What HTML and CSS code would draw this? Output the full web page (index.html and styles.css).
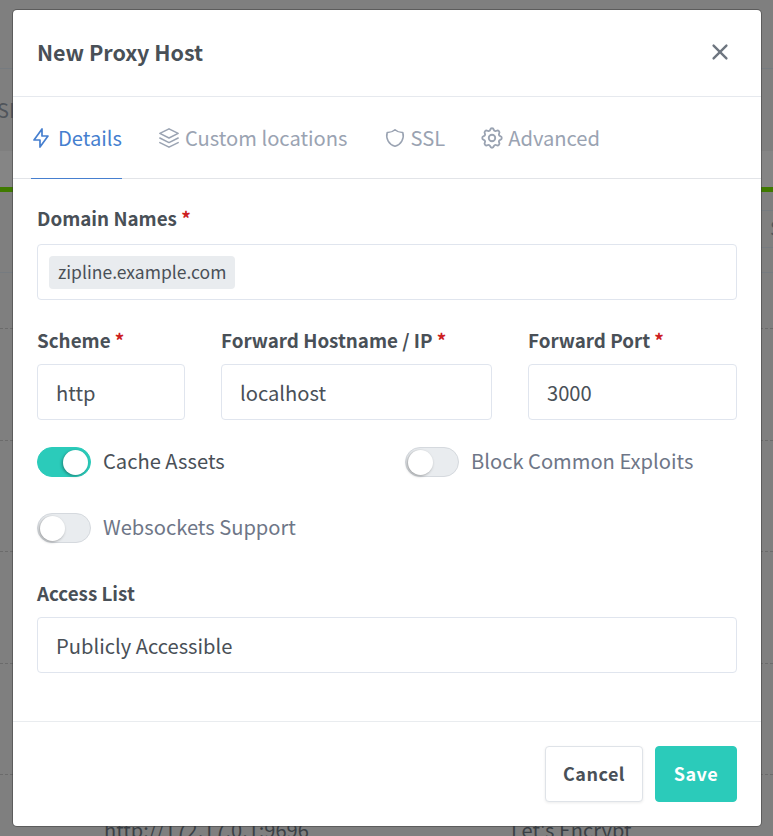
FILE: index.html
```html
<!DOCTYPE html>
<html lang="en">
<head>
<meta charset="utf-8">
<title>New Proxy Host</title>
<link rel="stylesheet" href="styles.css">
</head>
<body>
<div class="backdrop">
  <span class="bg-line solid l1"></span>
  <span class="bg-line solid l2"></span>
  <span class="bg-line solid l3"></span>
  <span class="bg-line solid l4"></span>
  <span class="bg-line dash d1"></span>
  <span class="bg-line dash d2"></span>
  <span class="bg-line dash d3"></span>
  <span class="bg-line dash d4"></span>
  <span class="bg-line dash d5"></span>
  <span class="bg-band"></span>
  <span class="bg-green"></span>
  <span class="bg-text t1">SI</span>
  <span class="bg-text t2">S</span>
  <span class="bg-text t3">http://172.17.0.1:9696</span>
  <span class="bg-text t4">Let's Encrypt</span>
</div>
<main class="modal">
  <header class="modal-header">
    <h1 class="modal-title">New Proxy Host</h1>
    <svg class="close" viewBox="0 0 24 24" fill="none" stroke="currentColor" stroke-width="2.6" stroke-linecap="round"><path d="M5 5l14 14M19 5L5 19"/></svg>
  </header>
  <nav class="tabs">
    <a class="tab active">
      <svg class="tab-icon icon-bolt" viewBox="0 0 24 24"><path d="M13 3v7h6l-8 11v-7H5l8-11"/></svg>
      Details
    </a>
    <a class="tab">
      <svg class="tab-icon icon-layers" viewBox="0 0 24 24"><path d="M12 2L2 7l10 5l10-5l-10-5"/><path d="M2 17l10 5l10-5"/><path d="M2 12l10 5l10-5"/></svg>
      Custom locations
    </a>
    <a class="tab">
      <svg class="tab-icon icon-shield" viewBox="0 0 24 24"><path d="M12 3a12 12 0 0 0 8.5 3a12 12 0 0 1-8.5 15a12 12 0 0 1-8.5-15a12 12 0 0 0 8.5-3"/></svg>
      SSL
    </a>
    <a class="tab">
      <svg class="tab-icon icon-gear" viewBox="0 0 24 24"><path d="M10.325 4.317c.426-1.756 2.924-1.756 3.35 0a1.724 1.724 0 0 0 2.573 1.066c1.543-.94 3.31.826 2.37 2.37a1.724 1.724 0 0 0 1.065 2.572c1.756.426 1.756 2.924 0 3.35a1.724 1.724 0 0 0-1.066 2.573c.94 1.543-.826 3.31-2.37 2.37a1.724 1.724 0 0 0-2.572 1.065c-.426 1.756-2.924 1.756-3.35 0a1.724 1.724 0 0 0-2.573-1.066c-1.543.94-3.31-.826-2.37-2.37a1.724 1.724 0 0 0-1.065-2.572c-1.756-.426-1.756-2.924 0-3.35a1.724 1.724 0 0 0 1.066-2.573c-.94-1.543.826-3.31 2.37-2.37c1 .608 2.296.07 2.572-1.065z"/><circle cx="12" cy="12" r="3"/></svg>
      Advanced
    </a>
  </nav>
  <section class="modal-body">
    <div class="field">
      <div class="label label-first">Domain Names <span class="req">*</span></div>
      <div class="input tags"><span class="chip">zipline.example.com</span></div>
    </div>
    <div class="row-3">
      <div class="field">
        <div class="label">Scheme <span class="req">*</span></div>
        <div class="input">http</div>
      </div>
      <div class="field">
        <div class="label">Forward Hostname / IP <span class="req">*</span></div>
        <div class="input">localhost</div>
      </div>
      <div class="field">
        <div class="label">Forward Port <span class="req">*</span></div>
        <div class="input">3000</div>
      </div>
    </div>
    <div class="switches">
      <label class="switch on"><span class="track"><span class="knob"></span></span><span class="switch-text">Cache Assets</span></label>
      <label class="switch"><span class="track"><span class="knob"></span></span><span class="switch-text">Block Common Exploits</span></label>
      <label class="switch"><span class="track"><span class="knob"></span></span><span class="switch-text">Websockets Support</span></label>
    </div>
    <div class="field">
      <div class="label">Access List</div>
      <div class="input">Publicly Accessible</div>
    </div>
  </section>
  <footer class="modal-footer">
    <button class="btn btn-cancel">Cancel</button>
    <button class="btn btn-save">Save</button>
  </footer>
</main>
</body>
</html>
```
FILE: styles.css
```css
* { box-sizing: border-box; }
html, body { margin: 0; padding: 0; height: 100%; }
body {
  background: #7f7f7f;
  font-family: "Noto Sans CJK JP", "Source Sans Pro", "Noto Sans", sans-serif;
  color: #495057;
  overflow: hidden;
  position: relative;
}
.backdrop { position: absolute; inset: 0; overflow: hidden; }
.bg-line { position: absolute; left: 0; right: 0; height: 1px; }
.solid { background: #767b80; }
.l1 { top: 68px; }
.l2 { top: 272px; }
.l3 { top: 210px; left: 761px; }
.l4 { top: 247px; left: 761px; }
.dash { border-top: 1px dashed #6b6b6b; height: 0; }
.d1 { top: 328px; }
.d2 { top: 440px; }
.d3 { top: 551px; }
.d4 { top: 663px; }
.d5 { top: 774px; }
.bg-band { position: absolute; left: 0; right: 0; top: 151px; height: 36px; background: #858585; }
.bg-green { position: absolute; left: 0; right: 0; top: 187px; height: 5px; background: #3f7a00; }
.bg-text { position: absolute; font-size: 20px; line-height: 24px; color: #3a3f45; white-space: nowrap; }
.t1 { left: -3px; top: 98px; color: #50555b; }
.t2 { left: 770px; top: 216px; color: #50555b; }
.t3 { left: 104px; top: 818px; }
.t4 { left: 511px; top: 818px; }

.modal {
  position: absolute;
  left: 13px;
  top: 10px;
  width: 748px;
  height: 816px;
  background: #fff;
  border-radius: 4px;
  display: flex;
  flex-direction: column;
  box-shadow: 0 0 0 1px rgba(50, 50, 50, .45);
}
.modal-header {
  height: 87px;
  flex: none;
  display: flex;
  align-items: center;
  justify-content: space-between;
  padding: 0 30px 0 24px;
  border-bottom: 1px solid #e6e9ee;
}
.modal-title { margin: 0 0 3px; font-size: 21.5px; line-height: 28px; font-weight: 700; color: #495057; }
.close { width: 22px; height: 22px; color: #6e7680; margin-bottom: 3px; }

.tabs {
  height: 82px;
  flex: none;
  display: flex;
  gap: 36px;
  padding: 0 0 0 18px;
  border-bottom: 1px solid #e2e4e8;
}
.tab {
  display: flex;
  align-items: center;
  gap: 5px;
  height: 82px;
  font-size: 20.15px;
  color: #9aa3b2;
  border-bottom: 1px solid transparent;
}
.tab.active { color: #467fcf; border-bottom-color: #467fcf; }
.tab-icon {
  fill: none;
  stroke: currentColor;
  stroke-width: 1.7;
  stroke-linecap: round;
  stroke-linejoin: round;
}
.icon-bolt { width: 24px; height: 24px; margin-left: -2px; }
.icon-layers { width: 22px; height: 22px; }
.icon-shield { width: 22px; height: 22px; }
.icon-gear { width: 26px; height: 26px; margin-left: -2px; margin-right: -2px; }

.modal-body { flex: 1; padding: 27px 24px 0; display: flex; flex-direction: column; }
.field { display: flex; flex-direction: column; min-width: 0; }
.label { font-size: 18.8px; line-height: 24px; font-weight: 700; color: #495057; margin-bottom: 12px; }
.label-first { margin-bottom: 14px; }
.req { color: #cd201f; }
.input {
  height: 56px;
  border: 1px solid #e0e5ee;
  border-radius: 4px;
  padding: 0 18px;
  display: flex;
  align-items: center;
  font-size: 20.15px;
  color: #495057;
}
.input.tags { padding: 0 11px; }
.chip {
  height: 33px;
  padding: 0 9px 1px;
  display: flex;
  align-items: center;
  background: #e9ecef;
  border-radius: 4px;
  font-size: 17.5px;
  color: #495057;
}
.row-3 {
  display: grid;
  grid-template-columns: 148px 271px 209px;
  gap: 36px;
  margin-top: 28px;
}
.switches {
  display: grid;
  grid-template-columns: 368px 1fr;
  row-gap: 36px;
  margin-top: 27px;
  margin-bottom: 38px;
}
.switch { display: flex; align-items: center; gap: 12px; height: 30px; }
.track {
  width: 54px;
  height: 30px;
  border-radius: 15px;
  background: #e9ecef;
  border: 1px solid #d5d9de;
  display: flex;
  align-items: center;
  padding: 0 2px;
  flex: none;
}
.knob {
  width: 25px;
  height: 25px;
  border-radius: 50%;
  background: #fff;
  box-shadow: -1px 1px 3px rgba(0, 0, 0, .35);
}
.switch-text { font-size: 20.15px; line-height: 30px; color: #6e7687; padding-bottom: 2px; }
.switch.on .track { background: #2bcbba; border-color: #2bcbba; justify-content: flex-end; }
.switch.on .switch-text { color: #495057; }

.modal-footer {
  height: 105px;
  flex: none;
  display: flex;
  justify-content: flex-end;
  align-items: center;
  gap: 12px;
  padding: 0 24px;
  border-top: 1px solid #e9ecef;
}
.btn {
  height: 56px;
  border-radius: 4px;
  font-family: inherit;
  font-size: 18px;
  font-weight: 700;
  letter-spacing: .5px;
  padding: 0 0 2px;
}
.btn-cancel { width: 98px; background: #fff; color: #495057; border: 1px solid #dfe3e8; box-shadow: 0 1px 3px rgba(0, 0, 0, .08); }
.btn-save { width: 82px; background: #2bcbba; color: #fff; border: 1px solid #2bcbba; }
```
